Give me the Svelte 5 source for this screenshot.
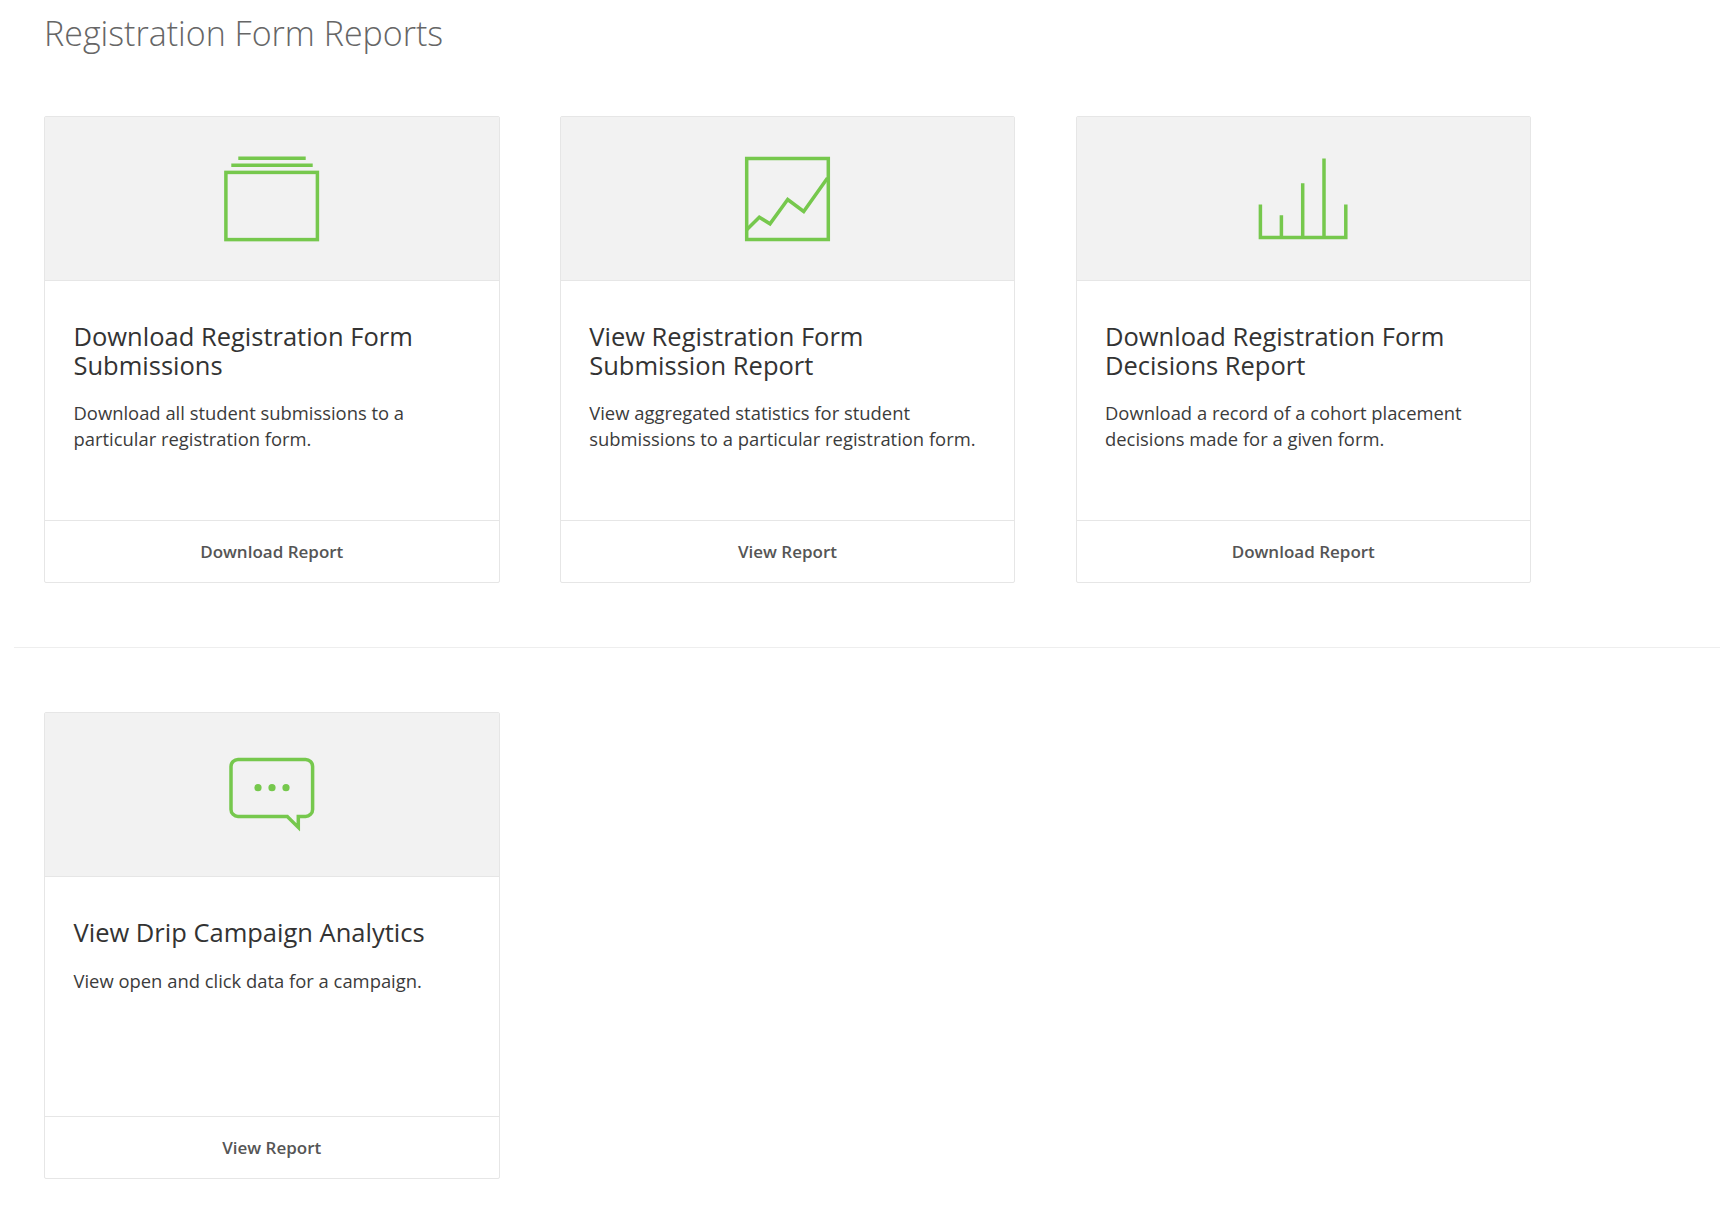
<script>
	const reports = [
		{
			icon: 'stack',
			title: 'Download Registration Form Submissions',
			text: 'Download all student submissions to a particular registration form.',
			action: 'Download Report'
		},
		{
			icon: 'chart',
			title: 'View Registration Form Submission Report',
			text: 'View aggregated statistics for student submissions to a particular registration form.',
			action: 'View Report'
		},
		{
			icon: 'bars',
			title: 'Download Registration Form Decisions Report',
			text: 'Download a record of a cohort placement decisions made for a given form.',
			action: 'Download Report'
		}
	];
	const campaigns = [
		{
			icon: 'chat',
			title: 'View Drip Campaign Analytics',
			text: 'View open and click data for a campaign.',
			action: 'View Report'
		}
	];
</script>

{#snippet card(item)}
	<div class="card">
		<div class="card-head">
			<svg width="100" height="90" viewBox="0 0 100 90" fill="none" stroke="#76c84d" stroke-width="3.5">
				{#if item.icon === 'stack'}
					<path d="M16.300 4.300h67.400M9.300 11.300h81.400" />
					<rect x="3.900" y="18.400" width="91.500" height="67.200" />
				{:else if item.icon === 'chart'}
					<rect x="8.700" y="4.500" width="81.600" height="81" />
					<path d="M8.700 75.800l12.600-12.600 10.700 6.600 17.700-24.300 16 12 23.800-33.500" />
				{:else if item.icon === 'bars'}
					<path d="M7.400 50.500v33.100h85.400v-33.100M28.400 61.200v22.400M49.700 29.200v54.400M71 4.500v79.100" />
				{:else}
					<path d="M16 9.400h67.600a7 7 0 0 1 7 7v43a7 7 0 0 1-7 7h-7.300v11l-11-11h-49.300a7 7 0 0 1-7-7v-43a7 7 0 0 1 7-7z" />
					<circle cx="36" cy="37.700" r="3.600" fill="#76c84d" stroke="none" />
					<circle cx="50" cy="37.700" r="3.600" fill="#76c84d" stroke="none" />
					<circle cx="64" cy="37.700" r="3.600" fill="#76c84d" stroke="none" />
				{/if}
			</svg>
		</div>
		<div class="card-body">
			<h2>{item.title}</h2>
			<p>{item.text}</p>
		</div>
		<div class="card-foot">{item.action}</div>
	</div>
{/snippet}

<div class="page">
	<h1>Registration Form Reports</h1>
	<section class="row">
		{#each reports as item}
			{@render card(item)}
		{/each}
	</section>
	<section class="row second">
		{#each campaigns as item}
			{@render card(item)}
		{/each}
	</section>
</div>

<style>
	:global(body) {
		margin: 0;
		background: #fff;
		font-family: 'Open Sans', sans-serif;
	}

	.page {
		padding-left: 14px;
		height: 1207px;
		box-sizing: border-box;
	}

	h1 {
		margin: 0;
		padding: 13px 0 0 30px;
		height: 116px;
		box-sizing: border-box;
		font-size: 34px;
		line-height: 40px;
		font-weight: 300;
		color: #666;
	}

	.row {
		display: flex;
		gap: 60.250px;
		padding: 0 0 64px 30px;
		border-bottom: 1px solid #eeeeee;
	}

	.second {
		padding-top: 64px;
		border-bottom: none;
	}

	.card {
		width: 455.500px;
		height: 467px;
		box-sizing: border-box;
		border: 1px solid #e6e6e6;
		border-radius: 2px;
		display: flex;
		flex-direction: column;
	}

	.card-head {
		height: 164px;
		box-sizing: border-box;
		flex: none;
		background: #f2f2f2;
		border-bottom: 1px solid #e6e6e6;
		display: flex;
		align-items: center;
		justify-content: center;
	}

	.card-body {
		flex: 1;
		padding: 41.400px 26px 0 28.500px;
	}

	h2 {
		margin: 0;
		font-size: 25.500px;
		line-height: 28.500px;
		font-weight: 400;
		color: #333;
	}

	p {
		margin: 21px 0 0;
		font-size: 18.400px;
		line-height: 26px;
		color: #3b3b3b;
	}

	.card-foot {
		height: 61px;
		flex: none;
		border-top: 1px solid #e6e6e6;
		display: flex;
		align-items: center;
		justify-content: center;
		font-size: 17px;
		font-weight: 600;
		color: #555;
	}
</style>
